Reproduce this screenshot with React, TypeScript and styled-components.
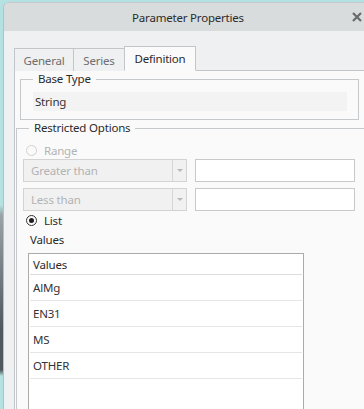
import React from 'react'
import styled, { createGlobalStyle } from 'styled-components'

const GlobalStyle = createGlobalStyle`
  html, body {
    margin: 0;
    padding: 0;
    height: 100%;
    overflow: hidden;
  }
  body {
    font-family: "Noto Sans", "Open Sans", sans-serif;
    font-size: 11.5px;
    letter-spacing: -0.2px;
    color: #333;
    background: linear-gradient(
      to bottom,
      #b4e2e2 0px,
      #b4e2e2 205px,
      #9aa3a8 215px,
      #4f585e 330px,
      #4f585e 370px,
      #b4e2e2 376px
    );
  }
`

const Screen = styled.div`
  height: 409px;
  padding: 2px 0 0 3px;
  box-sizing: border-box;
`

const Window = styled.div`
  height: 100%;
  display: flex;
  flex-direction: column;
  border-left: 1px solid #b9bec1;
  border-top: 1px solid #c4c8ca;
  border-top-left-radius: 6px;
  overflow: hidden;
  background: #eff0f1;
`

const TitleBar = styled.div`
  position: relative;
  height: 28px;
  flex: none;
  display: flex;
  align-items: center;
  justify-content: center;
  background: #d9dcdd;
  font-size: 11.5px;
  color: #2b2b2b;
  padding-left: 8px;
`

const CloseButton = styled.span`
  position: absolute;
  right: 2px;
  top: 9px;
  width: 10px;
  height: 10px;
  display: flex;
`

const Body = styled.div`
  flex: 1;
  display: flex;
  flex-direction: column;
  padding: 15px 0 0 10px;
`

const TabStrip = styled.div`
  display: flex;
  align-items: flex-end;
  height: 25px;
  flex: none;
  position: relative;
  z-index: 1;
`

const Tab = styled.div<{ $active?: boolean; $width: number }>`
  width: ${({ $width }) => $width}px;
  height: ${({ $active }) => ($active ? 25 : 23)}px;
  box-sizing: border-box;
  display: flex;
  align-items: center;
  justify-content: center;
  border: 1px solid #c3c6c8;
  border-bottom: ${({ $active }) => ($active ? '1px solid #fafafa' : 'none')};
  margin-left: -1px;
  background: ${({ $active }) => ($active ? '#fafafa' : '#eff0f1')};
  color: ${({ $active }) => ($active ? '#2b2b2b' : '#6e6e6e')};
  &:first-child {
    margin-left: 0;
  }
`

const Panel = styled.div`
  flex: 1;
  margin-top: -1px;
  margin-right: -2px;
  border: 1px solid #c3c6c8;
  border-right: 2px solid #c3c6c8;
  background: #fafafa;
  display: flex;
  flex-direction: column;
`

const Group = styled.fieldset<{ $inset: number }>`
  margin: 0 ${({ $inset }) => $inset}px;
  padding: 5px 11px 8px 12px;
  border: 1px solid #c6c9cb;
  min-width: 0;
`

const Legend = styled.legend<{ $shift: number }>`
  margin-left: ${({ $shift }) => $shift}px;
  padding: 0 5px;
  line-height: 16px;
  color: #2b2b2b;
`

const ReadOnlyField = styled.div`
  height: 19px;
  background: #f3f3f3;
  display: flex;
  align-items: center;
  padding-left: 2px;
  color: #333;
`

const OptionsGroup = styled(Group)`
  flex: 1;
  margin-right: -2px;
  padding: 6px 7px 0 6px;
  border-bottom: none;
  display: flex;
  flex-direction: column;
`

const RadioRow = styled.label<{ $disabled?: boolean; $gapTop?: number }>`
  display: flex;
  align-items: center;
  gap: 7px;
  height: 16px;
  margin-top: ${({ $gapTop }) => $gapTop ?? 0}px;
  padding-left: 3px;
  color: ${({ $disabled }) => ($disabled ? '#b3b3b3' : '#2b2b2b')};
`

const RadioCircle = styled.span<{ $checked?: boolean; $disabled?: boolean }>`
  width: 11px;
  height: 11px;
  box-sizing: border-box;
  border-radius: 50%;
  border: 1px solid ${({ $disabled }) => ($disabled ? '#d2d2d2' : '#333')};
  background: #fafafa;
  display: flex;
  align-items: center;
  justify-content: center;
  &::after {
    content: '';
    display: ${({ $checked }) => ($checked ? 'block' : 'none')};
    width: 5px;
    height: 5px;
    border-radius: 50%;
    background: #1f1f1f;
  }
`

const CompareRow = styled.div<{ $gapTop: number }>`
  display: flex;
  gap: 8px;
  margin-top: ${({ $gapTop }) => $gapTop}px;
`

const Combo = styled.div`
  width: 164px;
  height: 23px;
  box-sizing: border-box;
  border: 1px solid #d3d3d3;
  background: #f1f1f1;
  display: flex;
`

const ComboText = styled.div`
  flex: 1;
  display: flex;
  align-items: center;
  padding-left: 7px;
  color: #b3b3b3;
`

const ComboArrow = styled.div`
  width: 13px;
  border-left: 1px solid #d6d6d6;
  display: flex;
  align-items: center;
  justify-content: center;
  &::after {
    content: '';
    border-left: 3px solid transparent;
    border-right: 3px solid transparent;
    border-top: 3px solid #b8b8b8;
  }
`

const TextInput = styled.div`
  width: 160px;
  height: 23px;
  box-sizing: border-box;
  border: 1px solid #c9c9c9;
  background: #fff;
`

const Caption = styled.div`
  height: 16px;
  line-height: 16px;
  margin-top: 4px;
  padding-left: 7px;
  color: #2b2b2b;
`

const ListBox = styled.div`
  margin: 5px 0 0 5px;
  width: 276px;
  flex: 1;
  box-sizing: border-box;
  border: 1px solid #ababab;
  border-bottom: none;
  background: #fff;
  padding: 0 1px;
`

const ListHeader = styled.div`
  height: 21px;
  box-sizing: border-box;
  padding: 3px 0 0 3px;
  border-bottom: 1px solid #dcdcdc;
  color: #2b2b2b;
`

const ListRow = styled.div`
  height: 26px;
  box-sizing: border-box;
  display: flex;
  align-items: center;
  padding: 0 0 0 3px;
  border-bottom: 1px solid #e6e6e6;
  color: #333;
`

const values = ['AlMg', 'EN31', 'MS', 'OTHER']

export default function App() {
  return (
    <>
      <GlobalStyle />
      <Screen>
        <Window>
          <TitleBar>
            Parameter Properties
            <CloseButton>
              <svg width="10" height="10" viewBox="0 0 10 10">
                <path d="M1 1L9 9M9 1L1 9" stroke="#6a6a6a" strokeWidth="2.2" />
              </svg>
            </CloseButton>
          </TitleBar>
          <Body>
            <TabStrip>
              <Tab $width={60}>General</Tab>
              <Tab $width={52}>Series</Tab>
              <Tab $width={72} $active>
                Definition
              </Tab>
            </TabStrip>
            <Panel>
              <Group $inset={5}>
                <Legend $shift={0}>Base Type</Legend>
                <ReadOnlyField>String</ReadOnlyField>
              </Group>
              <OptionsGroup $inset={1}>
                <Legend $shift={6}>Restricted Options</Legend>
                <RadioRow $disabled>
                  <RadioCircle $disabled />
                  Range
                </RadioRow>
                <CompareRow $gapTop={1}>
                  <Combo>
                    <ComboText>Greater than</ComboText>
                    <ComboArrow />
                  </Combo>
                  <TextInput />
                </CompareRow>
                <CompareRow $gapTop={6}>
                  <Combo>
                    <ComboText>Less than</ComboText>
                    <ComboArrow />
                  </Combo>
                  <TextInput />
                </CompareRow>
                <RadioRow $gapTop={1}>
                  <RadioCircle $checked />
                  List
                </RadioRow>
                <Caption>Values</Caption>
                <ListBox>
                  <ListHeader>Values</ListHeader>
                  {values.map((v) => (
                    <ListRow key={v}>{v}</ListRow>
                  ))}
                </ListBox>
              </OptionsGroup>
            </Panel>
          </Body>
        </Window>
      </Screen>
    </>
  )
}
